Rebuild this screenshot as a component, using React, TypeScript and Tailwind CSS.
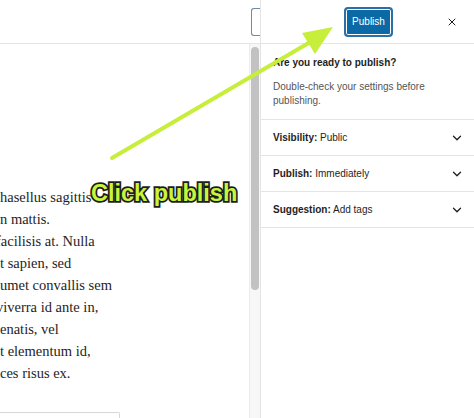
import { ChevronDown, X } from "lucide-react";

const lines: { text: string; shift: string }[] = [
  { text: "hasellus sagittis", shift: "ml-0" },
  { text: "n mattis.", shift: "ml-0" },
  { text: "facilisis at. Nulla", shift: "-ml-[4px]" },
  { text: "t sapien, sed", shift: "ml-0" },
  { text: "umet convallis sem", shift: "ml-0" },
  { text: "viverra id ante in,", shift: "-ml-[4px]" },
  { text: "enatis, vel", shift: "ml-0" },
  { text: "t elementum id,", shift: "ml-0" },
  { text: "ces risus ex.", shift: "ml-0" },
];

const rows = [
  { label: "Visibility:", value: "Public" },
  { label: "Publish:", value: "Immediately" },
  { label: "Suggestion:", value: "Add tags" },
];

function Editor() {
  return (
    <div className="flex w-[260px] shrink-0 flex-col">
      <div className="flex h-[44px] items-center justify-end border-b border-[#e4e4e4]">
        <div className="h-[28px] w-[9px] rounded-l-[3px] border-y border-l border-[#6f8aa5]" />
      </div>
      <div className="flex min-h-0 flex-1">
        <div className="flex-1 overflow-hidden pt-[142px] font-['Liberation_Serif',serif] text-[14.5px] leading-[22px] text-[#1e1e1e]">
          {lines.map((l) => (
            <div key={l.text} className={`whitespace-nowrap ${l.shift}`}>
              {l.text}
            </div>
          ))}
          <div className="mt-[28px] h-[20px] w-[120px] rounded-tr-[2px] border-t border-r border-[#d8d8d8]" />
        </div>
        <div className="flex w-[11px] shrink-0 flex-col border-l border-[#ececec] bg-[#f7f7f7] px-[1px] pt-[3px]">
          <div className="h-[243px] w-[8px] rounded-[4px] bg-[#c2c2c2]" />
        </div>
      </div>
    </div>
  );
}

function Sidebar() {
  return (
    <div className="flex flex-1 flex-col border-l border-[#e4e4e4] font-['Liberation_Sans',sans-serif] text-[10px] text-[#1e1e1e]">
      <div className="flex h-[44px] items-center border-b border-[#e4e4e4] pl-[83px] pr-[10px]">
        <button className="flex h-[30px] w-[49px] items-center justify-center rounded-[4px] border-2 border-[#2b6fa6] bg-[#0b6aa6] p-0 shadow-[inset_0_0_0_1px_#ffffff] text-[10px] font-medium text-white">
          Publish
        </button>
        <div className="ml-auto flex h-[24px] w-[24px] items-center justify-center text-[#1e1e1e]">
          <X size={12} strokeWidth={2} />
        </div>
      </div>
      <div className="border-b border-[#e4e4e4] px-[12px] pb-[11px] pt-[10px]">
        <div className="font-bold leading-[18px]">Are you ready to publish?</div>
        <p className="mt-[8px] leading-[14px] text-[#555]">
          Double-check your settings before
          <br />
          publishing.
        </p>
      </div>
      {rows.map((r) => (
        <div
          key={r.label}
          className="flex h-[36px] items-center border-b border-[#e4e4e4] pl-[12px] pr-[10px]"
        >
          <span>
            <span className="font-bold">{r.label}</span> {r.value}
          </span>
          <ChevronDown size={14} strokeWidth={2.2} className="ml-auto" />
        </div>
      ))}
    </div>
  );
}

export default function App() {
  return (
    <div className="relative flex h-[418px] w-[474px] overflow-hidden bg-white">
      <Editor />
      <Sidebar />

      {/* annotation overlay */}
      <svg
        className="pointer-events-none absolute left-0 top-0"
        width={474}
        height={418}
        viewBox="0 0 474 418"
      >
        <line
          x1={112}
          y1={158}
          x2={312}
          y2={41}
          stroke="#c6ee3a"
          strokeWidth={4}
          strokeLinecap="round"
        />
        <polygon points="333,27 302,33 315,54" fill="#c6ee3a" />
      </svg>
      <div className="pointer-events-none absolute left-[91px] top-[179px] whitespace-nowrap font-['Liberation_Sans',sans-serif] text-[23.5px] font-black leading-[28px] text-[#c8f53c] [-webkit-text-stroke:3.5px_#1c1c1c] [paint-order:stroke_fill]">
        Click publish
      </div>
    </div>
  );
}
